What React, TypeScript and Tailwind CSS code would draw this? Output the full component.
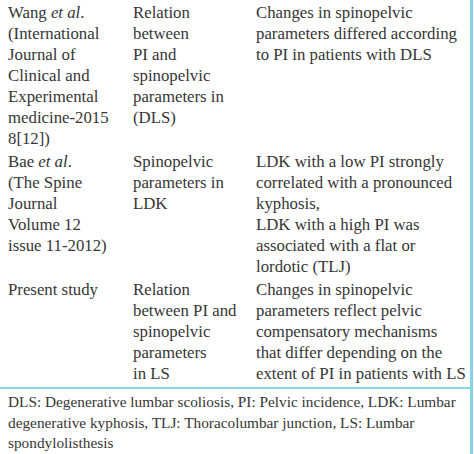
const rows: { study: React.ReactNode[]; topic: string[]; finding: string[] }[] = [
  {
    study: [
      <>
        Wang <i>et al</i>.
      </>,
      "(International",
      "Journal of",
      "Clinical and",
      "Experimental",
      "medicine-2015",
      "8[12])",
    ],
    topic: ["Relation", "between", "PI and", "spinopelvic", "parameters in", "(DLS)"],
    finding: [
      "Changes in spinopelvic",
      "parameters differed according",
      "to PI in patients with DLS",
    ],
  },
  {
    study: [
      <>
        Bae <i>et al</i>.
      </>,
      "(The Spine",
      "Journal",
      "Volume 12",
      "issue 11-2012)",
    ],
    topic: ["Spinopelvic", "parameters in", "LDK"],
    finding: [
      "LDK with a low PI strongly",
      "correlated with a pronounced",
      "kyphosis,",
      "LDK with a high PI was",
      "associated with a flat or",
      "lordotic (TLJ)",
    ],
  },
  {
    study: ["Present study"],
    topic: ["Relation", "between PI and", "spinopelvic", "parameters", "in LS"],
    finding: [
      "Changes in spinopelvic",
      "parameters reflect pelvic",
      "compensatory mechanisms",
      "that differ depending on the",
      "extent of PI in patients with LS",
    ],
  },
];

function Lines({ items }: { items: React.ReactNode[] }) {
  return (
    <div className="flex flex-col">
      {items.map((t, i) => (
        <span key={i} className="whitespace-nowrap">
          {t}
        </span>
      ))}
    </div>
  );
}

export default function App() {
  return (
    <div className="w-[474px] h-[454px] bg-white text-[#363636] overflow-hidden font-['Liberation_Serif','DejaVu_Serif',serif]">
      <div className="w-[473px] border-r-[3px] border-[#86d4e6] h-full flex flex-col">
        <div className="flex flex-col gap-[2px] pt-[2px] text-[16.8px] leading-[21px]">
          {rows.map((r, i) => (
            <div key={i} className="grid grid-cols-[125px_123px_1fr] pl-2">
              <Lines items={r.study} />
              <Lines items={r.topic} />
              <Lines items={r.finding} />
            </div>
          ))}
        </div>
        <div className="mt-[3px] h-[2px] bg-[#86d4e6]" />
        <div className="pl-2 pt-[3px] text-[15.3px] leading-[20.5px]">
          <div className="whitespace-nowrap">
            DLS: Degenerative lumbar scoliosis, PI: Pelvic incidence, LDK: Lumbar
          </div>
          <div className="whitespace-nowrap">
            degenerative kyphosis, TLJ: Thoracolumbar junction, LS: Lumbar
          </div>
          <div className="whitespace-nowrap">spondylolisthesis</div>
        </div>
      </div>
    </div>
  );
}
